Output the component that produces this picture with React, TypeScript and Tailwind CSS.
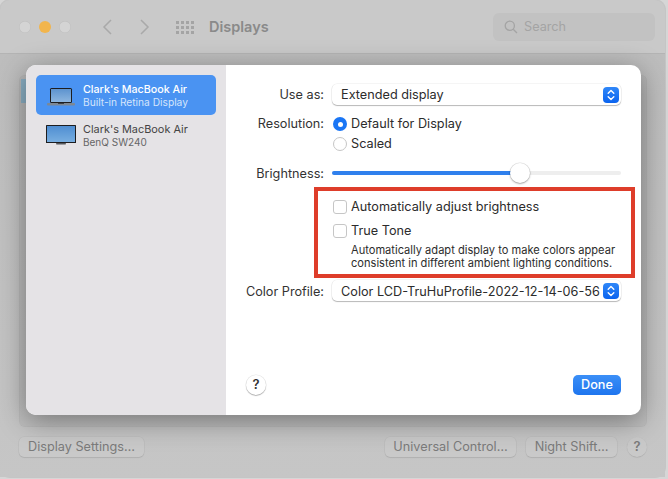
import type { FC } from 'react'

const font = "[font-family:Inter,'Liberation_Sans',sans-serif]"

const Laptop: FC = () => (
  <svg width="30" height="22" viewBox="0 0 30 22" className="shrink-0">
    <defs>
      <linearGradient id="scr1" x1="0" y1="0" x2="0" y2="1">
        <stop offset="0" stopColor="#5d93cf" />
        <stop offset="1" stopColor="#8db6df" />
      </linearGradient>
      <linearGradient id="scr2" x1="0" y1="0" x2="0" y2="1">
        <stop offset="0" stopColor="#4f8ed2" />
        <stop offset="1" stopColor="#78aee0" />
      </linearGradient>
    </defs>
    <rect x="4" y="4" width="22" height="15" rx="1.5" fill="#1d1d1f" />
    <rect x="5" y="5" width="20" height="13" fill="url(#scr1)" />
    <rect x="1" y="19" width="28" height="2.5" rx="1" fill="#7d8894" />
    <rect x="12" y="19" width="6" height="1" fill="#3c4046" />
  </svg>
)

const Monitor: FC = () => (
  <svg width="30" height="22" viewBox="0 0 30 22" className="shrink-0">
    <rect x="0" y="1" width="30" height="18" rx="0.5" fill="#1d1d1f" />
    <rect x="1" y="2" width="28" height="16" fill="url(#scr2)" />
    <rect x="10" y="19" width="10" height="1.5" rx="0.7" fill="#55585c" />
  </svg>
)

const Stepper: FC = () => (
  <span className="flex h-4 w-4 shrink-0 items-center justify-center rounded-[4px] bg-gradient-to-b from-[#2f87f8] to-[#0a63ef]">
    <svg width="8" height="12" viewBox="0 0 8 12" fill="none" stroke="#fff" strokeWidth="1.4" strokeLinecap="round" strokeLinejoin="round">
      <path d="M1.2 4.2 4 1.5l2.8 2.7" />
      <path d="M1.2 7.8 4 10.5l2.8-2.7" />
    </svg>
  </span>
)

const Select: FC<{ value: string }> = ({ value }) => (
  <div className="flex h-[21px] w-[289px] items-center justify-between rounded-[5px] bg-white pl-[9px] pr-[2px] text-[12.7px] text-[#2c2c2c] shadow-[0_0_0_0.5px_rgba(0,0,0,0.08),0_1px_1px_rgba(0,0,0,0.25)]">
    <span className="truncate pt-[1px]">{value}</span>
    <Stepper />
  </div>
)

const Label: FC<{ text: string }> = ({ text }) => (
  <div className="w-[98px] shrink-0 pt-[1px] text-right text-[12.7px] text-[#333]">{text}</div>
)

const Radio: FC<{ text: string; on?: boolean }> = ({ text, on }) => (
  <div className="ml-[1px] flex h-[20px] items-center gap-[4px] text-[12.7px] text-[#2c2c2c]">
    {on ? (
      <span className="flex h-[14px] w-[14px] items-center justify-center rounded-full bg-[#1a76f5]">
        <span className="h-[5px] w-[5px] rounded-full bg-white" />
      </span>
    ) : (
      <span className="h-[14px] w-[14px] rounded-full border border-[#c6c6c6] bg-white" />
    )}
    {text}
  </div>
)

const Check: FC<{ text: string }> = ({ text }) => (
  <div className="flex items-center gap-[4px] text-[12.7px] text-[#2c2c2c]">
    <span className="h-[14px] w-[14px] rounded-[3px] border border-[#c6c6c6] bg-white" />
    {text}
  </div>
)

const BackButton: FC<{ text: string; width: string }> = ({ text, width }) => (
  <div className={`flex h-[20px] items-center justify-center rounded-[5px] bg-[#c9c9c9] text-[12.7px] text-[#7b7b7b] shadow-[0_0_0_0.5px_rgba(0,0,0,0.06),0_1px_1px_rgba(0,0,0,0.08)] ${width}`}>
    {text}
  </div>
)

export default function App() {
  return (
    <div className={`relative flex h-[479px] w-[668px] flex-col overflow-hidden bg-[#d6d6d6] ${font}`}>
      {/* window behind the sheet */}
      <div className="flex h-[477px] w-[665px] flex-col rounded-[10px] bg-[#c3c3c3] shadow-[0_0_0_1px_rgba(0,0,0,0.08)]">
        <div className="flex h-[54px] shrink-0 items-center rounded-t-[10px] border-b border-[#b4b4b4] bg-[#c9c9c9] pl-[19px] pr-[10px] pt-[1px]">
          <div className="flex gap-[8px]">
            <span className="h-[12px] w-[12px] rounded-full bg-[#d4d4d4] shadow-[inset_0_0_0_0.5px_rgba(0,0,0,0.1)]" />
            <span className="h-[12px] w-[12px] rounded-full bg-[#f2b54c]" />
            <span className="h-[12px] w-[12px] rounded-full bg-[#d4d4d4] shadow-[inset_0_0_0_0.5px_rgba(0,0,0,0.1)]" />
          </div>
          <svg width="12" height="18" viewBox="0 0 12 18" fill="none" stroke="#a9a9a9" strokeWidth="1.5" className="ml-[30px]">
            <path d="M10 2 3 9l7 7" />
          </svg>
          <svg width="12" height="18" viewBox="0 0 12 18" fill="none" stroke="#a9a9a9" strokeWidth="1.5" className="ml-[26px]">
            <path d="M2 2l7 7-7 7" />
          </svg>
          <div className="ml-[25px] grid grid-cols-4 gap-[2px]">
            {Array.from({ length: 12 }).map((_, i) => (
              <span key={i} className="h-[3px] w-[3px] bg-[#a4a4a4]" />
            ))}
          </div>
          <div className="ml-[15px] text-[14.5px] font-semibold text-[#8a8a8a]">Displays</div>
          <div className="ml-auto flex h-[28px] w-[162px] items-center gap-[6px] rounded-[6px] bg-[#c2c2c2] pl-[11px] text-[12.7px] text-[#a4a4a4]">
            <svg width="14" height="14" viewBox="0 0 14 14" fill="none" stroke="#a4a4a4" strokeWidth="1.3">
              <circle cx="5.8" cy="5.8" r="4.6" />
              <path d="m9.2 9.2 3.8 3.8" />
            </svg>
            Search
          </div>
        </div>

        <div className="flex flex-1 flex-col bg-gradient-to-b from-[#bdbdbd] to-[#c6c6c6] pl-[19px] pr-[18px] pt-[21px]">
          <div className="h-[352px] w-[628px] shrink-0 rounded-[6px] bg-black/[0.03] shadow-[inset_0_0_0_0.5px_rgba(0,0,0,0.04)]">
            <div className="ml-[2px] mt-[4px] h-[24px] w-[10px] bg-[#8bafc4]" />
          </div>
          <div className="mt-[10px] flex items-center">
            <BackButton text="Display Settings…" width="w-[125px]" />
            <div className="ml-auto flex items-center gap-[10px]">
              <BackButton text="Universal Control…" width="w-[131px]" />
              <BackButton text="Night Shift…" width="w-[91px]" />
              <div className="flex h-[20px] w-[20px] items-center justify-center rounded-full bg-[#c9c9c9] text-[13px] font-semibold text-[#7b7b7b] shadow-[0_0.5px_1px_rgba(0,0,0,0.15)]">?</div>
            </div>
          </div>
        </div>
      </div>

      {/* sheet */}
      <div className="absolute left-[26px] top-[65px] flex h-[350px] w-[615px] overflow-hidden rounded-[10px] bg-white shadow-[0_6px_28px_rgba(0,0,0,0.38)]">
        <div className="w-[200px] shrink-0 bg-[#e5e3e6] px-[10px] pt-[10px]">
          <div className="flex h-[40px] items-center gap-[7px] rounded-[5px] bg-[#4a93f2] pl-[10px]">
            <Laptop />
            <div className="pt-[1px] leading-[13px]">
              <div className="text-[10.7px] font-medium text-white">Clark's MacBook Air</div>
              <div className="text-[10.2px] text-[#d5e5fb]">Built-in Retina Display</div>
            </div>
          </div>
          <div className="flex h-[40px] items-center gap-[7px] pl-[10px]">
            <Monitor />
            <div className="pt-[2px] leading-[13px]">
              <div className="text-[10.9px] text-[#444]">Clark's MacBook Air</div>
              <div className="text-[10px] text-[#666]">BenQ SW240</div>
            </div>
          </div>
        </div>

        <div className="relative flex flex-1 flex-col pt-[19px]">
          <div className="flex items-center gap-[8px]">
            <Label text="Use as:" />
            <Select value="Extended display" />
          </div>
          <div className="mt-[10px] flex gap-[8px]">
            <div className="-mt-[2px]">
              <Label text="Resolution:" />
            </div>
            <div className="-mt-[1px]">
              <Radio text="Default for Display" on />
              <Radio text="Scaled" />
            </div>
          </div>
          <div className="mt-[9px] flex items-center gap-[8px]">
            <Label text="Brightness:" />
            <div className="relative h-[20px] w-[289px]">
              <div className="absolute inset-x-0 top-[8px] h-[4px] rounded-full bg-[#eeeeee]" />
              <div className="absolute left-0 top-[8px] h-[4px] w-[187px] rounded-full bg-[#2f80ed]" />
              <div className="absolute left-[178px] top-0 h-[20px] w-[20px] rounded-full bg-white shadow-[0_0_0_0.5px_rgba(0,0,0,0.12),0_1px_2px_rgba(0,0,0,0.3)]" />
            </div>
          </div>
          <div className="ml-[107px] mt-[14px] flex flex-col gap-[5px]">
            <Check text="Automatically adjust brightness" />
            <div>
              <Check text="True Tone" />
              <div className="ml-[18px] mt-[4px] text-[11.1px] leading-[13px] text-[#2c2c2c]">
                Automatically adapt display to make colors appear<br />
                consistent in different ambient lighting conditions.
              </div>
            </div>
          </div>
          <div className="mt-[10px] flex items-center gap-[8px]">
            <Label text="Color Profile:" />
            <Select value="Color LCD-TruHuProfile-2022-12-14-06-56" />
          </div>
          <div className="mt-auto flex items-center justify-between pb-[20px] pl-[20px] pr-[20px]">
            <div className="flex h-[20px] w-[20px] items-center justify-center rounded-full bg-white text-[13px] font-semibold text-[#333] shadow-[0_0_0_0.5px_rgba(0,0,0,0.1),0_1px_1px_rgba(0,0,0,0.25)]">?</div>
            <div className="flex h-[20px] w-[48px] items-center justify-center rounded-[5px] bg-gradient-to-b from-[#3b8ff7] to-[#1e75ee] text-[12.7px] font-medium text-white">Done</div>
          </div>

          {/* red annotation frame */}
          <div className="absolute left-[88px] top-[122px] h-[91px] w-[321px] border-[4px] border-[#de3d2a]" />
        </div>
      </div>
    </div>
  )
}
